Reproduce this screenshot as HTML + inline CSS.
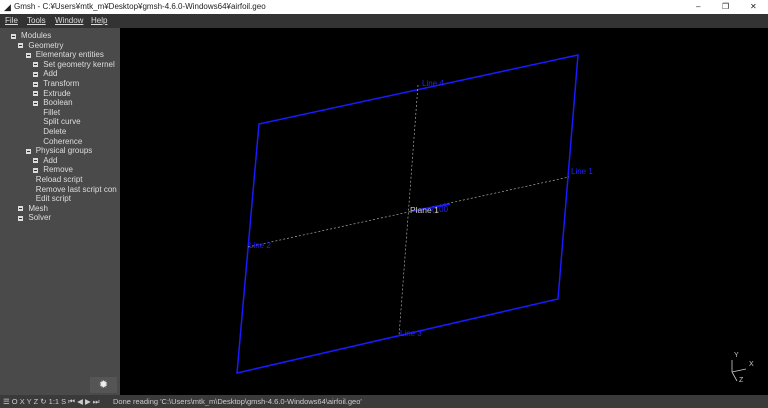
<!DOCTYPE html>
<html><head><style>
body{margin:0;width:768px;height:408px;overflow:hidden;background:#000;font-family:"Liberation Sans",sans-serif;position:relative}
.t{position:absolute;left:0;top:0;width:768px;height:14px;background:#fff;font-size:8px;color:#222;line-height:14px}
.m{position:absolute;left:0;top:14px;width:768px;height:14px;background:#333;font-size:8px;color:#ddd;line-height:14px}
.m span{position:absolute;text-decoration:underline}
.p{position:absolute;left:0;top:28px;width:120px;height:367px;background:#4a4a4a}
.r{position:absolute;font-size:8px;color:#ddd;line-height:9px;white-space:nowrap}
.b{position:absolute;width:5px;height:5px;background:#ddd;border:0 solid #222}
.b::after{content:"";position:absolute;left:1px;top:2px;width:3px;height:1px;background:#333}
.s{position:absolute;left:0;top:395px;width:768px;height:13px;background:#3a3a3a;font-size:7.5px;color:#ccc;line-height:13px}
</style></head><body>
<div class="t"><span style="position:absolute;left:4px;font-size:9px">&#9698;</span><span style="position:absolute;left:14px">Gmsh - C:¥Users¥mtk_m¥Desktop¥gmsh-4.6.0-Windows64¥airfoil.geo</span>
<span style="position:absolute;left:696px">–</span><span style="position:absolute;left:722px">❐</span><span style="position:absolute;left:750px">✕</span></div>
<div class="m"><span style="left:5px">File</span><span style="left:27px">Tools</span><span style="left:55px">Window</span><span style="left:91px">Help</span></div>
<div class="p"></div>
<div id="tree"></div>
<div style="position:absolute;left:90px;top:377px;width:27px;height:16px;background:#555;color:#eee;font-size:11px;line-height:16px;text-align:center">✹</div>
<svg style="position:absolute;left:120px;top:28px" width="648" height="367">
<g transform="translate(-120,-28)">
<polygon points="259,124 578,55 558,299 237,373" fill="none" stroke="#1a1aff" stroke-width="1.5"/>
<line x1="418" y1="85" x2="399" y2="336" stroke="#aaa" stroke-width="0.7" stroke-dasharray="2,2"/>
<line x1="248" y1="247" x2="569" y2="177" stroke="#aaa" stroke-width="0.7" stroke-dasharray="2,2"/>
<path d="M413 211 L450 204" stroke="#1a1aff" stroke-width="2"/>
<g font-size="8" fill="#2222ff" font-family="Liberation Sans">
<text x="422" y="86">Line 4</text><text x="571" y="174">Line 1</text><text x="249" y="248">Line 2</text><text x="400" y="336">Line 3</text><text x="432" y="212">(100</text></g>
<text x="410" y="213" font-size="8.5" fill="#ccc" font-family="Liberation Sans">Plane 1</text>
<g stroke="#ccc" stroke-width="0.8" fill="none"><path d="M732 372 L732 360 M732 372 L746 369 M732 372 L737 381"/></g>
<g font-size="7" fill="#ccc" font-family="Liberation Sans"><text x="734" y="357">Y</text><text x="749" y="366">X</text><text x="739" y="382">Z</text></g>
</g></svg>
<div class="s"><span style="position:absolute;left:3px">☰ O X Y Z ↻ 1:1 S ⏮ ◀ ▶ ⏭</span><span style="position:absolute;left:113px">Done reading 'C:\Users\mtk_m\Desktop\gmsh-4.6.0-Windows64\airfoil.geo'</span></div>
<script>
var rows=[[0,1,"Modules"],[1,1,"Geometry"],[2,1,"Elementary entities"],[3,1,"Set geometry kernel"],[3,1,"Add"],[3,1,"Transform"],[3,1,"Extrude"],[3,1,"Boolean"],[3,0,"Fillet"],[3,0,"Split curve"],[3,0,"Delete"],[3,0,"Coherence"],[2,1,"Physical groups"],[3,1,"Add"],[3,1,"Remove"],[2,0,"Reload script"],[2,0,"Remove last script con"],[2,0,"Edit script"],[1,1,"Mesh"],[1,1,"Solver"]];
var h="";rows.forEach(function(r,i){var y=31+i*9.6;var bx=11+r[0]*7.4;if(r[1])h+='<div class="b" style="left:'+bx+'px;top:'+(y+2.5)+'px"></div>';h+='<div class="r" style="left:'+(bx+10)+'px;top:'+y+'px">'+r[2]+'</div>';});
document.getElementById("tree").innerHTML=h;
</script>
</body></html>
